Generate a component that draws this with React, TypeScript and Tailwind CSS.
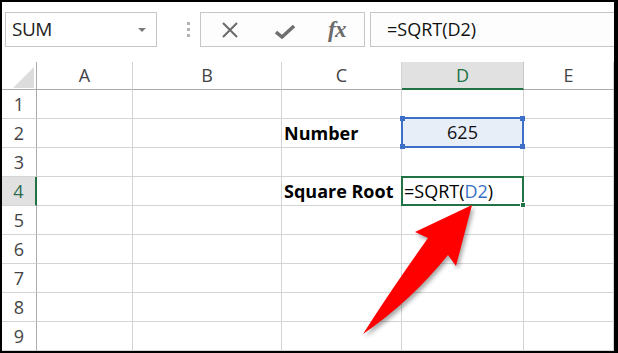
import React from "react";

const cols = ["A", "B", "C", "D", "E"];
const rows = [1, 2, 3, 4, 5, 6, 7, 8, 9];

function Cell({ r, c }: { r: number; c: string }) {
  const base =
    "relative border-r border-b border-[#d4d4d4] flex items-center text-[18px] text-black";
  if (c === "C" && r === 2) {
    return (
      <div className={base}>
        <span className="pl-[2px] font-bold whitespace-nowrap">Number</span>
      </div>
    );
  }
  if (c === "C" && r === 4) {
    return (
      <div className={base + " overflow-visible"}>
        <span className="pl-[2px] font-bold whitespace-nowrap z-10">Square Root</span>
      </div>
    );
  }
  if (c === "D" && r === 2) {
    return (
      <div className={base}>
        <div className="absolute -left-px -top-[2px] -right-[1px] -bottom-[1px] border-2 border-[#3d6fc8] bg-[#e8eef8] flex items-center justify-center z-10">
          <span className="text-[18px] text-[#111]">625</span>
          <span className="absolute -left-[3px] -top-[3px] w-[5px] h-[5px] bg-[#3d6fc8]" />
          <span className="absolute -right-[3px] -top-[3px] w-[5px] h-[5px] bg-[#3d6fc8]" />
          <span className="absolute -left-[3px] -bottom-[3px] w-[5px] h-[5px] bg-[#3d6fc8]" />
          <span className="absolute -right-[3px] -bottom-[3px] w-[5px] h-[5px] bg-[#3d6fc8]" />
        </div>
      </div>
    );
  }
  if (c === "D" && r === 4) {
    return (
      <div className={base}>
        <div className="absolute -left-px -top-px -right-[1px] -bottom-[1px] border-2 border-[#217346] flex items-center z-10">
          <span className="pl-px text-[18px] text-black whitespace-nowrap">
            =SQRT(<span className="text-[#3a6fc6]">D2</span>)
          </span>
          <span className="absolute -right-[4px] -bottom-[4px] w-[6px] h-[6px] bg-[#217346] border border-white" />
        </div>
      </div>
    );
  }
  return <div className={base} />;
}

export default function App() {
  return (
    <div className="relative w-[618px] h-[353px] overflow-hidden bg-white border-t-2 border-l-2 border-r-4 border-b-2 border-black font-['Open_Sans',sans-serif]">
      {/* toolbar */}
      <div className="h-[60px] flex items-start pt-[10px]">
        <div className="ml-[3px] w-[152px] h-[35px] border border-[#c6c6c6] bg-white flex items-center justify-between pl-[6px] pr-[10px]">
          <span className="text-[19px] text-[#222] tracking-tight">SUM</span>
          <span className="w-0 h-0 border-l-[4px] border-r-[4px] border-t-[4px] border-l-transparent border-r-transparent border-t-[#7a7a7a]" />
        </div>
        <div className="ml-[19px] w-[24px] h-[35px] flex flex-col items-center justify-center gap-[3px]">
          <span className="w-[3px] h-[3px] bg-[#b3b3b3]" />
          <span className="w-[3px] h-[3px] bg-[#b3b3b3]" />
          <span className="w-[3px] h-[3px] bg-[#b3b3b3]" />
        </div>
        <div className="w-[165px] h-[35px] border border-[#c6c6c6] bg-[#fdfdfd] flex items-center">
          <svg width="18" height="16" viewBox="0 0 18 16" className="ml-[20px]">
            <path d="M2 1 L16 15 M16 1 L2 15" stroke="#6a6a6a" strokeWidth="2" fill="none" />
          </svg>
          <svg width="20" height="14" viewBox="0 0 20 14" className="ml-[36px] mt-[4px]">
            <path d="M1 7 L7 12 L19 1" stroke="#6f6f6f" strokeWidth="3.4" fill="none" />
          </svg>
          <span className="ml-[33px] text-[23px] italic font-bold text-[#6a6a6a] font-['Liberation_Serif',serif] leading-none tracking-tight">
            fx
          </span>
        </div>
        <div className="ml-[5px] flex-1 h-[35px] border-t border-b border-l border-[#c6c6c6] bg-[#fdfdfd] flex items-center pl-[16px]">
          <span className="text-[18px] text-[#111]">=SQRT(D2)</span>
        </div>
      </div>

      {/* grid */}
      <div className="grid grid-cols-[35px_96px_149px_120px_122px_1fr] grid-rows-[28px_repeat(9,29px)]">
        <div className="relative border-r border-b border-[#ababab] bg-white">
          <span className="absolute left-[11px] top-[5px] w-0 h-0 border-b-[21px] border-l-[21px] border-l-transparent border-b-[#dcdcdc]" />
        </div>
        {cols.map((c) =>
          c === "D" ? (
            <div
              key={c}
              className="bg-[#e1e1e1] border-r border-[#c8c8c8] border-b-2 border-b-[#217346] flex items-center justify-center text-[18px] text-[#217346]"
            >
              {c}
            </div>
          ) : (
            <div
              key={c}
              className="bg-white border-r border-[#d4d4d4] border-b border-b-[#ababab] flex items-center justify-center text-[18px] text-[#444]"
            >
              {c}
            </div>
          )
        )}
        {rows.map((r) => (
          <React.Fragment key={r}>
            {r === 4 ? (
              <div className="bg-[#e1e1e1] border-b border-[#d4d4d4] border-r-2 border-r-[#217346] flex items-center justify-center text-[18px] text-[#2f6b50]">
                {r}
              </div>
            ) : (
              <div className="bg-white border-b border-[#d4d4d4] border-r border-r-[#ababab] flex items-center justify-center text-[18px] text-[#444]">
                {r}
              </div>
            )}
            {cols.map((c) => (
              <Cell key={c} r={r} c={c} />
            ))}
          </React.Fragment>
        ))}
      </div>

      {/* red arrow overlay */}
      <svg
        className="absolute -left-[2px] -top-[2px] pointer-events-none z-20"
        width="618"
        height="353"
        viewBox="0 0 618 353"
        style={{ filter: "drop-shadow(2px 3px 2px rgba(0,0,0,0.35))" }}
      >
        <path
          d="M472 205 L456 266 L448 255 Q411 301 363 334 Q391 290 428 238 L415 232 Z"
          fill="#ff0000"
        />
      </svg>
    </div>
  );
}
